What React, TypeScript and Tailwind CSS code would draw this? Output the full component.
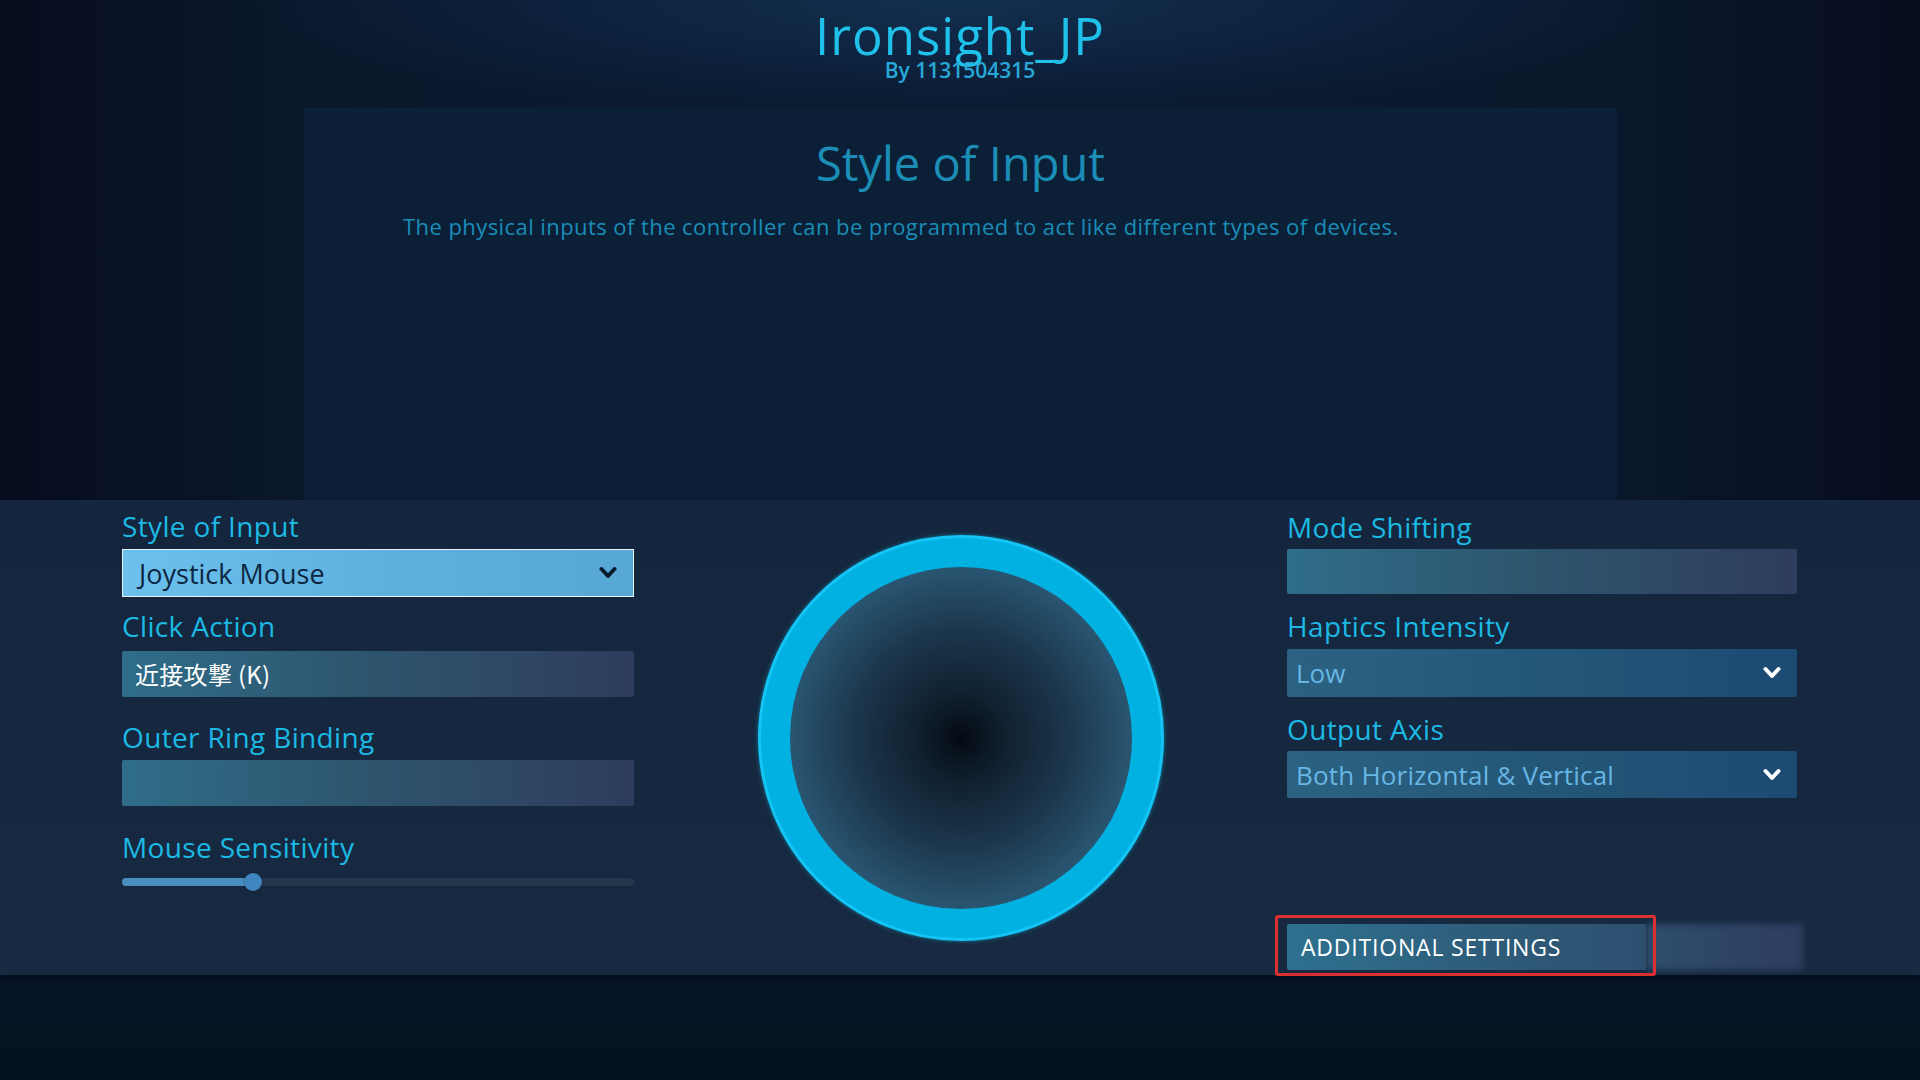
import React from "react";

function Chevron({ color }: { color: string }) {
  return (
    <svg width="18" height="14" viewBox="0 0 18 14" className="shrink-0">
      <polyline points="2.5,3 9,10 15.5,3" fill="none" stroke={color} strokeWidth="4" strokeLinecap="round" strokeLinejoin="round" />
    </svg>
  );
}

function Label({ children, className = "" }: { children: React.ReactNode; className?: string }) {
  return <div className={"text-[28px] leading-[36px] tracking-[0.35px] text-[#1cb9e4] whitespace-nowrap " + className}>{children}</div>;
}

export default function App() {
  return (
    <div className="w-[1920px] h-[1080px] overflow-hidden flex flex-col font-['Open_Sans','Noto_Sans_CJK_JP',sans-serif] bg-[#061426]">
      {/* Top area */}
      <div className="h-[500px] flex flex-col bg-[linear-gradient(90deg,#080d1f_0%,#0a182c_16%,#0a1a2e_50%,#0a182c_84%,#080d1f_100%)]">
        <header className="h-[108px] flex flex-col items-center pt-[5px] bg-[radial-gradient(ellipse_700px_120px_at_50%_0%,#12304e_0%,#0e2442_45%,rgba(11,26,54,0)_100%)]">
          <h1 className="text-[51px] leading-[60px] text-[#1fc1ea] tracking-[1px]">Ironsight_JP</h1>
          <div className="-mt-[5px] text-[21px] leading-[20px] font-semibold text-[#27a8d8]">By 1131504315</div>
        </header>
        <div className="ml-[304px] w-[1313px] flex-1 bg-[#0b2036] flex flex-col pt-[32px]">
          <h2 className="text-center text-[47px] leading-[47px] text-[#1b8db6]">Style of Input</h2>
          <p className="mt-[28px] pl-[99px] text-[22px] leading-[22px] tracking-[0.43px] text-[#1a8db8] whitespace-nowrap">
            The physical inputs of the controller can be programmed to act like different types of devices.
          </p>
        </div>
      </div>

      {/* Controls area */}
      <div className="h-[475px] flex bg-[linear-gradient(180deg,#13263d_0%,#172a41_100%)] shadow-[0_3px_6px_rgba(0,0,0,0.45)] relative z-10">
        {/* Left column */}
        <div className="ml-[122px] w-[512px] flex flex-col">
          <Label className="mt-[8px]">Style of Input</Label>
          <div className="mt-[5px] h-[48px] border border-[#e6f3fb] bg-[linear-gradient(90deg,#6cc0ed_0%,#5eb1de_50%,#56a7d4_100%)] flex items-center justify-between pl-[16px] pr-[16px]">
            <span className="text-[27px] leading-none text-[#0d2640]">Joystick Mouse</span>
            <Chevron color="#0b1b2e" />
          </div>
          <Label className="mt-[11px]">Click Action</Label>
          <div className="mt-[7px] h-[46px] rounded-[2px] bg-[linear-gradient(90deg,#2f6d89_0%,#2e566f_45%,#2e3c5d_100%)] flex items-center pl-[13px]">
            <span className="text-[24px] leading-none text-white tracking-[0.3px] font-['Noto_Sans_CJK_JP','Open_Sans',sans-serif]">近接攻撃 (K)</span>
          </div>
          <Label className="mt-[22px]">Outer Ring Binding</Label>
          <div className="mt-[5px] h-[46px] rounded-[2px] bg-[linear-gradient(90deg,#2f6d89_0%,#2e566f_45%,#2e3c5d_100%)]" />
          <Label className="mt-[23px]">Mouse Sensitivity</Label>
          <div className="mt-[7px] h-[20px] flex items-center">
            <div className="relative w-full h-[8px] rounded-full bg-[#22374c]">
              <div className="h-full w-[131px] rounded-l-full bg-[#4a8dbf]" />
              <div className="absolute left-[122px] top-[-5px] w-[18px] h-[18px] rounded-full bg-[#3f86bf] shadow-[0_0_2px_rgba(0,0,0,0.4)]" />
            </div>
          </div>
        </div>

        {/* Center stick */}
        <div className="flex-1 flex items-center justify-center">
          <div className="w-[406px] h-[406px] rounded-full bg-[#00b1e2] border-[3px] border-[#14c4f4] flex items-center justify-center shadow-[0_0_4px_rgba(20,196,244,0.5)]">
            <div className="w-[342px] h-[342px] rounded-full bg-[radial-gradient(circle,#040a13_0%,#10202f_18%,#1c374d_45%,#2a5773_72%,#346b8a_100%)]" />
          </div>
        </div>

        {/* Right column */}
        <div className="w-[510px] mr-[123px] flex flex-col">
          <Label className="mt-[9px]">Mode Shifting</Label>
          <div className="mt-[4px] h-[45px] rounded-[2px] bg-[linear-gradient(90deg,#2f6d89_0%,#2e566f_45%,#2e3c5d_100%)]" />
          <Label className="mt-[14px]">Haptics Intensity</Label>
          <div className="mt-[5px] h-[48px] rounded-[2px] bg-[linear-gradient(90deg,#2b6282_0%,#245777_50%,#1b4a73_100%)] flex items-center justify-between pl-[9px] pr-[16px]">
            <span className="text-[26px] leading-none text-[#68b6e4]">Low</span>
            <Chevron color="#ffffff" />
          </div>
          <Label className="mt-[14px]">Output Axis</Label>
          <div className="mt-[4px] h-[47px] rounded-[2px] bg-[linear-gradient(90deg,#2b6282_0%,#245777_50%,#1b4a73_100%)] flex items-center justify-between pl-[9px] pr-[16px]">
            <span className="text-[26px] leading-none tracking-[0.2px] text-[#68b6e4]">Both Horizontal &amp; Vertical</span>
            <Chevron color="#ffffff" />
          </div>
          <div className="mt-[126px] h-[46px] relative flex -mr-[6px]">
            <div className="w-[359px] h-full rounded-l-[2px] bg-[linear-gradient(90deg,#2e7190_0%,#2e5b78_60%,#2e5070_100%)] flex items-center pl-[14px]">
              <span className="text-[23px] leading-none text-white tracking-[0.8px]">ADDITIONAL SETTINGS</span>
            </div>
            <div className="flex-1 h-full bg-[linear-gradient(90deg,#2e4d6c_0%,#2f3d5f_100%)] blur-[3px]" />
            <div className="absolute left-[-12px] top-[-9px] w-[381px] h-[61px] border-[3px] border-[#dc3030] rounded-[3px]" />
          </div>
        </div>
      </div>

      {/* Footer */}
      <div className="flex-1 bg-[linear-gradient(180deg,#061427_0%,#05121f_100%)]" />
    </div>
  );
}
